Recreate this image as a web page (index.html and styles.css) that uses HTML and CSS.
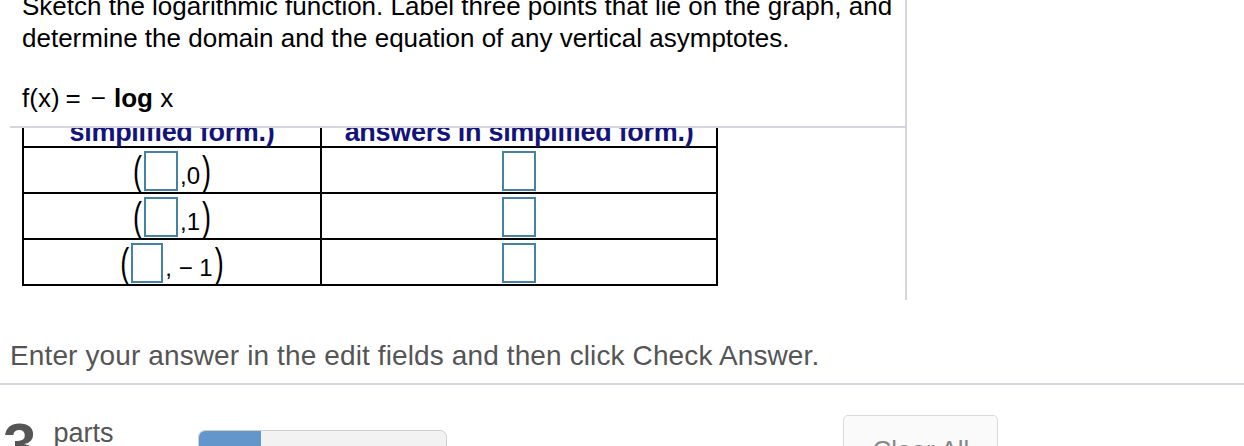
FILE: index.html
```html
<!DOCTYPE html>
<html>
<head>
<meta charset="utf-8">
<title>Logarithmic function</title>
<link rel="stylesheet" href="styles.css">
</head>
<body>
<main class="page">
  <section class="pane">
    <div class="question">
      <p class="prompt">Sketch the logarithmic function. Label three points that lie on the graph, and<br>determine the domain and the equation of any vertical asymptotes.</p>
      <p class="func">f(x)<span class="eq">=</span><span class="minus">−</span><b>log</b> x</p>
    </div>
    <div class="scroll">
      <table class="points">
        <thead>
          <tr><th class="c1">simplified form.)</th><th class="c2">answers in simplified form.)</th></tr>
        </thead>
        <tbody>
          <tr>
            <td><span class="pt"><span class="par">(</span><span class="box"></span><span class="val">,0</span><span class="par">)</span></span></td>
            <td><span class="box"></span></td>
          </tr>
          <tr>
            <td><span class="pt"><span class="par">(</span><span class="box"></span><span class="val">,1</span><span class="par">)</span></span></td>
            <td><span class="box"></span></td>
          </tr>
          <tr>
            <td><span class="pt"><span class="par">(</span><span class="box narrow"></span><span class="val">, − 1</span><span class="par">)</span></span></td>
            <td><span class="box"></span></td>
          </tr>
        </tbody>
      </table>
    </div>
  </section>
  <p class="instr">Enter your answer in the edit fields and then click Check Answer.</p>
  <div class="rule"></div>
  <div class="footer">
    <span class="count">3</span>
    <span class="label">parts</span>
    <div class="progress"><div class="fill"></div></div>
    <button class="clear" type="button">Clear All</button>
  </div>
</main>
</body>
</html>
```

FILE: styles.css
```css
* { box-sizing: border-box; }
html, body { margin: 0; padding: 0; background: #fff; }
body {
  font-family: "Liberation Sans", Arial, sans-serif;
  width: 1244px;
  height: 446px;
  overflow: hidden;
}
.page { width: 1244px; height: 446px; overflow: hidden; }

.pane {
  width: 907px;
  height: 300px;
  border-right: 2px solid #d3d6e0;
  display: flex;
  flex-direction: column;
  overflow: hidden;
}
.question {
  margin: -10px 0 0 10px;
  padding: 0 0 12px 12px;
  border-bottom: 2px solid #d3d6e0;
  background: #fff;
  flex: none;
}
.prompt {
  margin: 0;
  font-size: 26px;
  line-height: 32px;
  color: #000;
}
.func {
  margin: 28px 0 0;
  font-size: 26px;
  line-height: 32px;
  color: #000;
}
.func .eq { margin: 0 10px 0 6px; }
.func .minus { margin-right: 8px; }

.scroll { flex: 1; overflow: hidden; }
.points {
  border-collapse: collapse;
  margin: -12px 0 0 22px;
}
.points th, .points td {
  border: 2px solid #000;
  padding: 0;
  text-align: center;
}
.points th {
  font-size: 27px;
  line-height: 28px;
  padding-top: 0;
  font-weight: bold;
  color: #13137c;
  letter-spacing: -0.3px;
}
.points th.c1 { width: 298px; }
.points th.c2 { width: 396px; }
.points td {
  height: 46px;
  vertical-align: bottom;
  padding-bottom: 1px;
  font-size: 24px;
  color: #000;
}
.pt {
  display: inline-flex;
  align-items: flex-end;
  height: 40px;
}
.par {
  display: inline-block;
  font-size: 27px;
  line-height: 30px;
  transform: scaleY(1.5);
  align-self: center;
  margin: 0 2px;
}
.val { line-height: 26px; padding-bottom: 2px; margin-left: 2px; }
.box {
  display: inline-block;
  width: 34px;
  height: 40px;
  border: 2px solid #4383a6;
  vertical-align: bottom;
}
.box.narrow { width: 32px; }

.instr {
  margin: 40px 0 0 10px;
  font-size: 28px;
  line-height: 32px;
  color: #555;
  letter-spacing: 0.12px;
}
.rule {
  height: 2px;
  background: #d3d6e0;
  margin-top: 11px;
}
.footer {
  display: flex;
  align-items: flex-start;
}
.count {
  font-size: 60px;
  line-height: 60px;
  font-weight: bold;
  color: #555;
  margin: 30px 0 0 3px;
}
.label {
  font-size: 27px;
  line-height: 30px;
  color: #555;
  margin: 33px 0 0 17px;
}
.progress {
  width: 249px;
  height: 30px;
  margin: 45px 0 0 85px;
  border: 1px solid #cfcfcf;
  border-radius: 7px;
  background: #f2f2f2;
  overflow: hidden;
}
.fill {
  width: 62px;
  height: 100%;
  background: #6397cc;
}
.clear {
  margin: 30px 0 0 396px;
  width: 155px;
  height: 56px;
  border: 1px solid #d9d9d9;
  border-radius: 5px;
  background: #fafafa;
  color: #888;
  font-family: "Liberation Sans", Arial, sans-serif;
  font-size: 26px;
  line-height: 30px;
  padding: 14px 0 0;
  text-align: center;
  vertical-align: top;
}
```
